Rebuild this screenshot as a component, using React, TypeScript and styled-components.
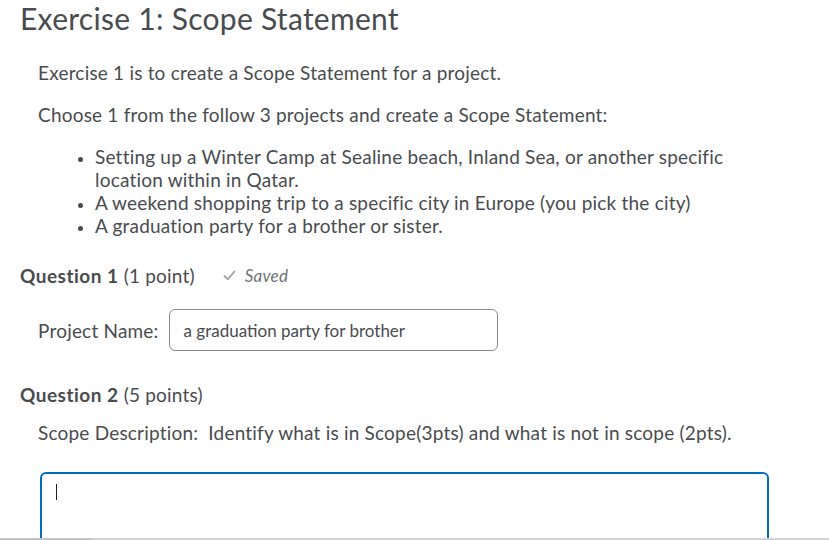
import React from 'react';
import styled, { createGlobalStyle } from 'styled-components';

const GlobalStyle = createGlobalStyle`
  html, body {
    margin: 0;
    padding: 0;
    background: #ffffff;
  }
  body {
    font-family: Lato, "Open Sans", sans-serif;
    color: #494c4e;
    letter-spacing: 0.2px;
    overflow: hidden;
  }
`;

const Page = styled.div`
  width: 829px;
  height: 540px;
  position: relative;
  overflow: hidden;
  box-sizing: border-box;
  padding: 0 20px;
`;

const Title = styled.h1`
  margin: 0;
  padding-top: 1px;
  font-size: 30px;
  font-weight: 400;
  line-height: 34px;
  letter-spacing: 0.28px;
  color: #494c4e;
`;

const Body = styled.div`
  padding: 26px 0 0 18px;
  font-size: 19px;
  line-height: 23px;
`;

const Para = styled.p`
  margin: 0 0 19px;
`;

const List = styled.ul`
  margin: 0;
  padding-left: 57px;

  li {
    line-height: 23px;
  }

  li::marker {
    font-size: 16px;
  }
`;

const QuestionHead = styled.div<{ top: number }>`
  display: flex;
  align-items: center;
  gap: 28px;
  font-size: 19px;
  line-height: 23px;
  margin-top: ${(p) => p.top}px;
`;

const Strong = styled.strong`
  font-weight: 700;
  letter-spacing: 0.5px;
`;

const Saved = styled.span`
  display: inline-flex;
  align-items: center;
  gap: 9px;
  font-size: 17px;
  font-style: italic;
  color: #6e7376;
`;

const FieldRow = styled.div`
  display: flex;
  align-items: center;
  gap: 10px;
  margin: 22px 0 0 18px;
  font-size: 19px;
`;

const TextInput = styled.div`
  box-sizing: border-box;
  width: 329px;
  height: 42px;
  border: 1px solid #868c90;
  border-radius: 6px;
  padding: 0 14px;
  display: flex;
  align-items: center;
  font-size: 17px;
  letter-spacing: 0;
  color: #494c4e;
`;

const Prompt = styled.div`
  margin: 15px 0 0 18px;
  font-size: 19px;
  line-height: 23px;
`;

const TextArea = styled.div`
  box-sizing: border-box;
  margin: 28px 0 0 20px;
  width: 729px;
  height: 100px;
  border: 2px solid #006fbf;
  border-radius: 6px;
  padding: 10px 14px;
`;

const Caret = styled.div`
  width: 1px;
  height: 16px;
  background: #202122;
`;

const ScrollTrack = styled.div`
  position: absolute;
  left: 0;
  right: 0;
  bottom: 0;
  height: 2px;
  background: #d3d3d3;
`;

const ScrollThumb = styled.div`
  position: absolute;
  left: 0;
  bottom: 0;
  width: 92px;
  height: 2px;
  background: #c4c4c4;
`;

const Check = () => (
  <svg width="13" height="11" viewBox="0 0 13 11">
    <path d="M1.5 6 L4.8 9.3 L11.5 1.5" fill="none" stroke="#9ea3a6" strokeWidth="1.8" strokeLinecap="round" strokeLinejoin="round" />
  </svg>
);

const App: React.FC = () => (
  <>
    <GlobalStyle />
    <Page>
      <Title>Exercise 1: Scope Statement</Title>
      <Body>
        <Para>Exercise 1 is to create a Scope Statement for a project.</Para>
        <Para>Choose 1 from the follow 3 projects and create a Scope Statement:</Para>
        <List>
          <li>
            Setting up a Winter Camp at Sealine beach, Inland Sea, or another specific
            <br />
            location within in Qatar.
          </li>
          <li>A weekend shopping trip to a specific city in Europe (you pick the city)</li>
          <li>A graduation party for a brother or sister.</li>
        </List>
      </Body>
      <QuestionHead top={27}>
        <span>
          <Strong>Question 1</Strong> (1 point)
        </span>
        <Saved>
          <Check /> Saved
        </Saved>
      </QuestionHead>
      <FieldRow>
        <span>Project Name:</span>
        <TextInput>a graduation party for brother</TextInput>
      </FieldRow>
      <QuestionHead top={32}>
        <span>
          <Strong>Question 2</Strong> (5 points)
        </span>
      </QuestionHead>
      <Prompt>Scope Description:&nbsp; Identify what is in Scope(3pts) and what is not in scope (2pts).</Prompt>
      <TextArea>
        <Caret />
      </TextArea>
      <ScrollTrack>
        <ScrollThumb />
      </ScrollTrack>
    </Page>
  </>
);

export default App;
